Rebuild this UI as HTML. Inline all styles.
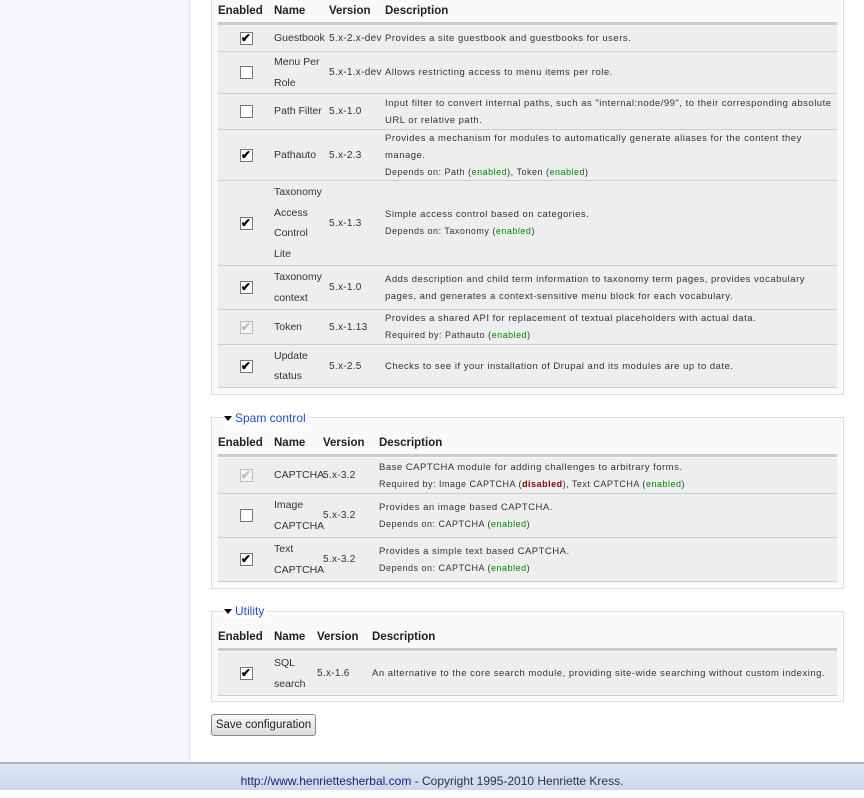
<!DOCTYPE html>
<html><head><meta charset="utf-8"><style>
*{margin:0;padding:0;box-sizing:border-box}
body{width:864px;height:790px;position:relative;background:#fff;font-family:"Liberation Sans",Arial,sans-serif;color:#333;overflow:hidden}
#side{position:absolute;left:0;top:0;width:190px;height:762px;background:#f4f6fa;border-right:1px solid #dde3ec}
.fs{position:absolute;left:211px;width:633px;border:1px solid #ddd;background:#fafafa}
.leg{position:absolute;left:224px;background:#fff;padding:0 3px 0 0;font-size:12px;color:#1b4fc7}
.leg:before{content:"";display:inline-block;border-left:4px solid transparent;border-right:4px solid transparent;border-top:5px solid #000;margin-right:3px;vertical-align:1px}
.hd{position:absolute;left:218px;width:619px;font-size:11.5px;font-weight:bold;color:#222;border-bottom:3px solid #ccc;height:25px;display:flex;align-items:center}
.row{position:absolute;left:218px;width:619px;background:#eee;border-bottom:1px solid #ccc;display:flex;align-items:center;font-size:10px;letter-spacing:.3px;color:#333}
.c1{width:56px;display:flex;justify-content:center}
.cb{width:13px;height:13px;border:1px solid #777;background:#fff;font-size:12px;line-height:11px;text-align:center;color:#000;font-weight:bold}
.cb.d{border-color:#bbb;color:#bbb;background:#f4f4f4}
.nm{line-height:20.5px;letter-spacing:0;font-size:10.5px}
.ds{line-height:17px;letter-spacing:.5px;font-size:9.5px;white-space:nowrap}
.g{color:#080}.r{color:#800}
</style></head><body>
<div id="side"></div>

<div class="fs" style="top:-2px;height:397px;border-top:none"></div>
<div class="hd" style="top:0"><span style="width:56px">Enabled</span><span style="width:55px">Name</span><span style="width:56px">Version</span><span>Description</span></div>
<div class="row" style="top:25px;height:27px"><div class="c1"><div class="cb">✔</div></div><div class="nm" style="width:55px">Guestbook</div><div style="width:56px">5.x-2.x-dev</div><div class="ds">Provides a site guestbook and guestbooks for users.</div></div>
<div class="row" style="top:52px;height:42px"><div class="c1"><div class="cb"></div></div><div class="nm" style="width:55px">Menu Per<br>Role</div><div style="width:56px">5.x-1.x-dev</div><div class="ds">Allows restricting access to menu items per role.</div></div>
<div class="row" style="top:94px;height:36px"><div class="c1"><div class="cb"></div></div><div class="nm" style="width:55px">Path Filter</div><div style="width:56px">5.x-1.0</div><div class="ds">Input filter to convert internal paths, such as "internal:node/99", to their corresponding absolute<br>URL or relative path.</div></div>
<div class="row" style="top:130px;height:51px"><div class="c1"><div class="cb">✔</div></div><div class="nm" style="width:55px">Pathauto</div><div style="width:56px">5.x-2.3</div><div class="ds">Provides a mechanism for modules to automatically generate aliases for the content they<br>manage.<br><span style="font-size:9px">Depends on: Path (<span class="g">enabled</span>), Token (<span class="g">enabled</span>)</span></div></div>
<div class="row" style="top:181px;height:85px"><div class="c1"><div class="cb">✔</div></div><div class="nm" style="width:55px">Taxonomy<br>Access<br>Control<br>Lite</div><div style="width:56px">5.x-1.3</div><div class="ds">Simple access control based on categories.<br><span style="font-size:9px">Depends on: Taxonomy (<span class="g">enabled</span>)</span></div></div>
<div class="row" style="top:266px;height:44px"><div class="c1"><div class="cb">✔</div></div><div class="nm" style="width:55px">Taxonomy<br>context</div><div style="width:56px">5.x-1.0</div><div class="ds">Adds description and child term information to taxonomy term pages, provides vocabulary<br>pages, and generates a context-sensitive menu block for each vocabulary.</div></div>
<div class="row" style="top:310px;height:35px"><div class="c1"><div class="cb d">✔</div></div><div class="nm" style="width:55px">Token</div><div style="width:56px">5.x-1.13</div><div class="ds">Provides a shared API for replacement of textual placeholders with actual data.<br><span style="font-size:9px">Required by: Pathauto (<span class="g">enabled</span>)</span></div></div>
<div class="row" style="top:345px;height:43px"><div class="c1"><div class="cb">✔</div></div><div class="nm" style="width:55px">Update<br>status</div><div style="width:56px">5.x-2.5</div><div class="ds">Checks to see if your installation of Drupal and its modules are up to date.</div></div>

<div class="fs" style="top:417px;height:172px"></div>
<div class="leg" style="top:411px">Spam control</div>
<div class="hd" style="top:432px"><span style="width:56px">Enabled</span><span style="width:49px">Name</span><span style="width:56px">Version</span><span>Description</span></div>
<div class="row" style="top:458px;height:36px"><div class="c1"><div class="cb d">✔</div></div><div class="nm" style="width:49px">CAPTCHA</div><div style="width:56px">5.x-3.2</div><div class="ds">Base CAPTCHA module for adding challenges to arbitrary forms.<br><span style="font-size:9px">Required by: Image CAPTCHA (<b class="r">disabled</b>), Text CAPTCHA (<span class="g">enabled</span>)</span></div></div>
<div class="row" style="top:494px;height:44px"><div class="c1"><div class="cb"></div></div><div class="nm" style="width:49px">Image<br>CAPTCHA</div><div style="width:56px">5.x-3.2</div><div class="ds">Provides an image based CAPTCHA.<br><span style="font-size:9px">Depends on: CAPTCHA (<span class="g">enabled</span>)</span></div></div>
<div class="row" style="top:538px;height:44px"><div class="c1"><div class="cb">✔</div></div><div class="nm" style="width:49px">Text<br>CAPTCHA</div><div style="width:56px">5.x-3.2</div><div class="ds">Provides a simple text based CAPTCHA.<br><span style="font-size:9px">Depends on: CAPTCHA (<span class="g">enabled</span>)</span></div></div>

<div class="fs" style="top:611px;height:91px"></div>
<div class="leg" style="top:604px">Utility</div>
<div class="hd" style="top:626px"><span style="width:56px">Enabled</span><span style="width:43px">Name</span><span style="width:55px">Version</span><span>Description</span></div>
<div class="row" style="top:652px;height:44px"><div class="c1"><div class="cb">✔</div></div><div class="nm" style="width:43px">SQL<br>search</div><div style="width:55px">5.x-1.6</div><div class="ds">An alternative to the core search module, providing site-wide searching without custom indexing.</div></div>

<div style="position:absolute;left:211px;top:714px;width:105px;height:22px;border:1px solid #888;border-radius:3px;background:linear-gradient(#fafafa,#ddd);font-size:11.5px;color:#222;text-align:center;line-height:20px">Save configuration</div>

<div style="position:absolute;left:0;top:762px;width:864px;height:28px;border-top:2px solid #a9b7c9;background:linear-gradient(#dfe8f4,#c8d8ee);font-size:12px;color:#333;text-align:center;line-height:34px"><span style="color:#1a237e">http://www.henriettesherbal.com</span> - Copyright 1995-2010 Henriette Kress.</div>
</body></html>
